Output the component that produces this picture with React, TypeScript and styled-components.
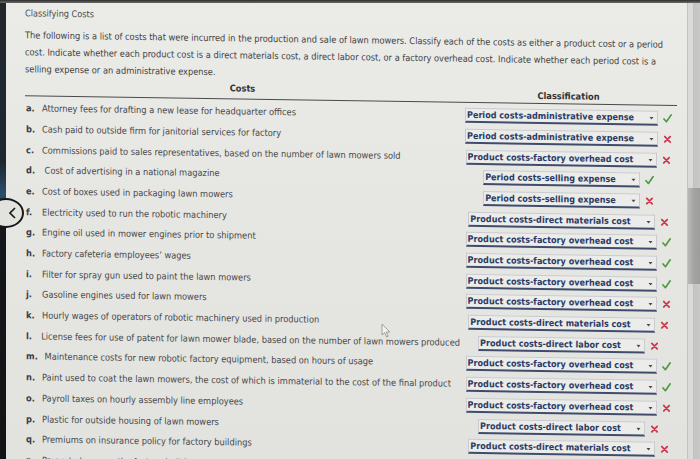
import * as React from 'react'
import styled, { createGlobalStyle } from 'styled-components'

type Mark = 'ok' | 'x' | null

interface CostRow {
  letter: string
  text: string
  choice: string
  mark: Mark
}

const rows: CostRow[] = [
  { letter: 'a', text: 'Attorney fees for drafting a new lease for headquarter offices', choice: 'Period costs-administrative expense', mark: 'ok' },
  { letter: 'b', text: 'Cash paid to outside firm for janitorial services for factory', choice: 'Period costs-administrative expense', mark: 'x' },
  { letter: 'c', text: 'Commissions paid to sales representatives, based on the number of lawn mowers sold', choice: 'Product costs-factory overhead cost', mark: 'x' },
  { letter: 'd', text: ' Cost of advertising in a national magazine', choice: 'Period costs-selling expense', mark: 'ok' },
  { letter: 'e', text: 'Cost of boxes used in packaging lawn mowers', choice: 'Period costs-selling expense', mark: 'x' },
  { letter: 'f', text: 'Electricity used to run the robotic machinery', choice: 'Product costs-direct materials cost', mark: 'x' },
  { letter: 'g', text: 'Engine oil used in mower engines prior to shipment', choice: 'Product costs-factory overhead cost', mark: 'ok' },
  { letter: 'h', text: 'Factory cafeteria employees\u2019 wages', choice: 'Product costs-factory overhead cost', mark: 'ok' },
  { letter: 'i', text: 'Filter for spray gun used to paint the lawn mowers', choice: 'Product costs-factory overhead cost', mark: 'ok' },
  { letter: 'j', text: 'Gasoline engines used for lawn mowers', choice: 'Product costs-factory overhead cost', mark: 'x' },
  { letter: 'k', text: 'Hourly wages of operators of robotic machinery used in production', choice: 'Product costs-direct materials cost', mark: 'x' },
  { letter: 'l', text: 'License fees for use of patent for lawn mower blade, based on the number of lawn mowers produced', choice: 'Product costs-direct labor cost', mark: 'x' },
  { letter: 'm', text: ' Maintenance costs for new robotic factory equipment, based on hours of usage', choice: 'Product costs-factory overhead cost', mark: 'ok' },
  { letter: 'n', text: 'Paint used to coat the lawn mowers, the cost of which is immaterial to the cost of the final product', choice: 'Product costs-factory overhead cost', mark: 'ok' },
  { letter: 'o', text: 'Payroll taxes on hourly assembly line employees', choice: 'Product costs-factory overhead cost', mark: 'x' },
  { letter: 'p', text: 'Plastic for outside housing of lawn mowers', choice: 'Product costs-direct labor cost', mark: 'x' },
  { letter: 'q', text: 'Premiums on insurance policy for factory buildings', choice: 'Product costs-direct materials cost', mark: 'x' },
  { letter: 'r', text: 'Property taxes on the factory building and equipment', choice: 'Product costs-factory overhead cost', mark: null },
]

const GlobalStyle = createGlobalStyle`
  html, body {
    margin: 0;
    padding: 0;
    background: #e5e5e2;
    overflow: hidden;
  }
`

const Screen = styled.div`
  position: relative;
  width: 700px;
  height: 459px;
  overflow: hidden;
  display: flex;
  flex-direction: column;
  background: linear-gradient(180deg, #ebebe8 0%, #e6e6e3 45%, #e2e2df 100%);
  font-family: "DejaVu Sans Condensed", "DejaVu Sans", sans-serif;
  font-stretch: condensed;
  color: #444;
`

const TopBar = styled.div`
  height: 3px;
  background: linear-gradient(180deg, #2e2e2e, #6b6b69);
`

const Body = styled.div`
  flex: 1;
  display: flex;
  min-height: 0;
`

const LeftRail = styled.div`
  width: 6px;
  background: linear-gradient(180deg, #23272c 0%, #1d2732 35%, #2d4d6b 42%, #14171b 47%, #121315 100%);
`

const Sheet = styled.div`
  flex: 1;
  padding: 4px 10px 0 19px;
  transform: skewY(0.85deg);
  transform-origin: 0 0;
`

const Title = styled.div`
  font-size: 9.1px;
  line-height: 12px;
  color: #4a4a4a;
`

const Intro = styled.p`
  margin: 8px 0 0;
  font-size: 9.2px;
  line-height: 16.8px;
  color: #3e3e3e;
  white-space: nowrap;
`

const Table = styled.div`
  display: flex;
  flex-direction: column;
`

const HeadRow = styled.div`
  display: grid;
  grid-template-columns: 435px 1fr;
  align-items: end;
  height: 18px;
  border-bottom: 1.5px solid #4a4a4a;
`

const HeadCell = styled.div<{ $drop: number }>`
  text-align: center;
  font-weight: bold;
  font-size: 9.2px;
  color: #333;
  padding-bottom: ${p => p.$drop}px;
`

const Rows = styled.div`
  padding-top: 2px;
`

const Row = styled.div`
  display: grid;
  grid-template-columns: 435px 1fr;
  align-items: center;
  height: 20.7px;
`

const Label = styled.div`
  display: flex;
  align-items: center;
  padding-left: 1px;
  font-size: 9.2px;
  color: #474747;
  white-space: pre;
  padding-bottom: 2px;
`

const Letter = styled.span`
  width: 16px;
  font-weight: bold;
  color: #3a3a44;
`

const ChoiceCell = styled.div`
  display: flex;
  justify-content: center;
  align-items: center;
  gap: 5px;
`

const Select = styled.div`
  display: inline-flex;
  align-items: center;
  gap: 15px;
  height: 12px;
  padding: 0 3px 0 1px;
  border: 1px solid #c9cbd0;
  border-bottom: 2px solid #3f4c6c;
  background: #ecedeb;
  font-weight: bold;
  font-size: 9px;
  color: #2b3b63;
  white-space: nowrap;
`

const Caret = styled.svg`
  width: 5px;
  height: 6px;
  flex: none;
`

const MarkBox = styled.svg`
  width: 9px;
  height: 9px;
  flex: none;
`

const Scrollbar = styled.div`
  width: 12px;
  display: flex;
  flex-direction: column;
  border-left: 1px solid #c2c2c0;
  background: linear-gradient(90deg, #dadad8 0%, #dadad8 40%, #c3c3c1 45%, #c9c9c7 100%);
`

const ScrollThumb = styled.div`
  margin-top: 185px;
  height: 96px;
  background: linear-gradient(90deg, #b9b9b7 0%, #a3a3a1 50%, #9c9c9a 100%);
`

const BackButton = styled.div`
  position: absolute;
  left: -12px;
  top: 198px;
  width: 26px;
  height: 26px;
  border-radius: 50%;
  border: 2px solid #161616;
  background: #e2e2df;
  display: flex;
  align-items: center;
  justify-content: flex-end;
  padding-right: 6px;
  box-sizing: content-box;
`

const Cursor = styled.svg`
  position: absolute;
  left: 381px;
  top: 323px;
  width: 10px;
  height: 15px;
`

function ResultMark({ mark }: { mark: Mark }) {
  if (mark === 'ok') {
    return (
      <MarkBox viewBox="0 0 9 9">
        <path d="M1 5.2 L3.4 8 L8.2 1" fill="none" stroke="#4f9a45" strokeWidth="1.7" strokeLinecap="round" strokeLinejoin="round" />
      </MarkBox>
    )
  }
  if (mark === 'x') {
    return (
      <MarkBox viewBox="0 0 9 9">
        <path d="M1.8 1.8 L7.2 7.2 M7.2 1.8 L1.8 7.2" stroke="#d2364d" strokeWidth="1.8" strokeLinecap="round" />
      </MarkBox>
    )
  }
  return <MarkBox viewBox="0 0 9 9" />
}

export default function App() {
  return (
    <Screen>
      <GlobalStyle />
      <TopBar />
      <Body>
        <LeftRail />
        <Sheet>
          <Title>Classifying Costs</Title>
          <Intro>
            The following is a list of costs that were incurred in the production and sale of lawn mowers. Classify each of the costs as either a product cost or a period
            <br />
            cost. Indicate whether each product cost is a direct materials cost, a direct labor cost, or a factory overhead cost. Indicate whether each period cost is a
            <br />
            selling expense or an administrative expense.
          </Intro>
          <Table>
            <HeadRow>
              <HeadCell $drop={5}>Costs</HeadCell>
              <HeadCell $drop={2}>Classification</HeadCell>
            </HeadRow>
            <Rows>
              {rows.map(r => (
                <Row key={r.letter}>
                  <Label>
                    <Letter>{r.letter}.</Letter>
                    {r.text}
                  </Label>
                  <ChoiceCell>
                    <Select>
                      {r.choice}
                      <Caret viewBox="0 0 5 6">
                        <path d="M0.5 2.5 L4.5 2.5 L2.5 5 Z" fill="#4a4a4a" />
                      </Caret>
                    </Select>
                    <ResultMark mark={r.mark} />
                  </ChoiceCell>
                </Row>
              ))}
            </Rows>
          </Table>
        </Sheet>
        <Scrollbar>
          <ScrollThumb />
        </Scrollbar>
      </Body>
      <BackButton>
        <svg width="7" height="12" viewBox="0 0 7 12">
          <path d="M6 1 L1 6 L6 11" fill="none" stroke="#1a1a1a" strokeWidth="1.6" />
        </svg>
      </BackButton>
      <Cursor viewBox="0 0 10 15">
        <path d="M1 1 L1 12 L3.6 9.6 L5.6 14 L7.2 13.3 L5.3 9 L8.8 9 Z" fill="#f2f2f0" stroke="#8a8a8a" strokeWidth="0.8" />
      </Cursor>
    </Screen>
  )
}
